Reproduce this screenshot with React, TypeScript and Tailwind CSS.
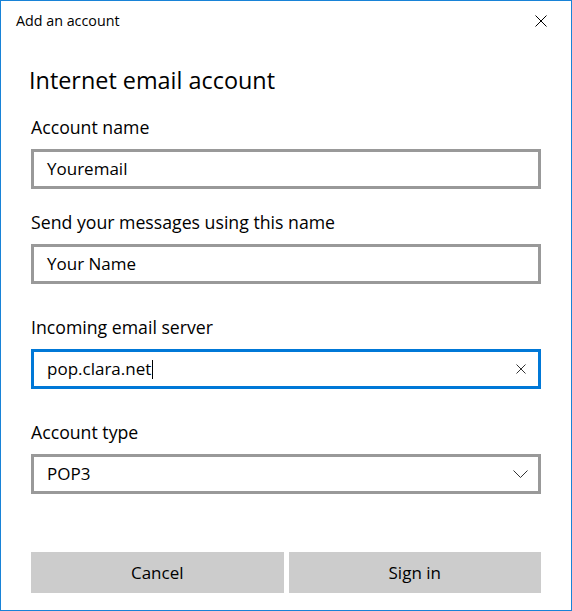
import React from "react";

function Field({ label, children, className = "" }: { label: string; children: React.ReactNode; className?: string }) {
  return (
    <div className={className}>
      <div className="h-[22px] leading-[22px] text-[17.7px] text-black mb-[11px] whitespace-nowrap">{label}</div>
      {children}
    </div>
  );
}

export default function App() {
  return (
    <div className="w-[572px] h-[611px] bg-white border border-[#1883d7] flex flex-col font-['Open_Sans',sans-serif] text-black">
      <div className="h-[39px] flex items-center justify-between pl-[15px] pr-[24px]">
        <span className="text-[14.3px] leading-[20px]">Add an account</span>
        <svg width="12" height="12" viewBox="0 0 12 12" className="block">
          <path d="M0.5 0.5 L11.5 11.5 M11.5 0.5 L0.5 11.5" stroke="#000" strokeWidth="1" fill="none" />
        </svg>
      </div>
      <div className="px-[30px] flex flex-col">
        <div className="mt-[24px] text-[23.4px] leading-[32px] -ml-[2px] whitespace-nowrap">Internet email account</div>

        <Field label="Account name" className="mt-[20px]">
          <div className="h-[40px] border-[3px] border-[#999999] flex items-center pl-[13px] text-[17px]">Youremail</div>
        </Field>

        <Field label="Send your messages using this name" className="mt-[22px]">
          <div className="h-[40px] border-[3px] border-[#999999] flex items-center pl-[13px] text-[17px]">Your Name</div>
        </Field>

        <Field label="Incoming email server" className="mt-[32px]">
          <div className="h-[40px] border-[3px] border-[#0078d7] flex items-center justify-between pl-[13px] pr-[12px] text-[17px]">
            <span className="flex items-center">
              pop.clara.net
              <span className="inline-block w-[1px] h-[19px] bg-black ml-[1px]" />
            </span>
            <svg width="10" height="10" viewBox="0 0 10 10" className="block">
              <path d="M0.5 0.5 L9.5 9.5 M9.5 0.5 L0.5 9.5" stroke="#333" strokeWidth="1" fill="none" />
            </svg>
          </div>
        </Field>

        <Field label="Account type" className="mt-[32px]">
          <div className="h-[40px] border-[3px] border-[#999999] flex items-center justify-between pl-[13px] pr-[10px] text-[17px]">
            <span>POP3</span>
            <svg width="15" height="8" viewBox="0 0 15 8" className="block">
              <path d="M0.5 0.5 L7.5 7.5 L14.5 0.5" stroke="#333" strokeWidth="1" fill="none" />
            </svg>
          </div>
        </Field>

        <div className="mt-[58px] flex gap-[5px]">
          <div className="flex-1 h-[41px] bg-[#cccccc] flex items-center justify-center text-[17px]">Cancel</div>
          <div className="flex-1 h-[41px] bg-[#cccccc] flex items-center justify-center text-[17px]">Sign in</div>
        </div>
      </div>
    </div>
  );
}
